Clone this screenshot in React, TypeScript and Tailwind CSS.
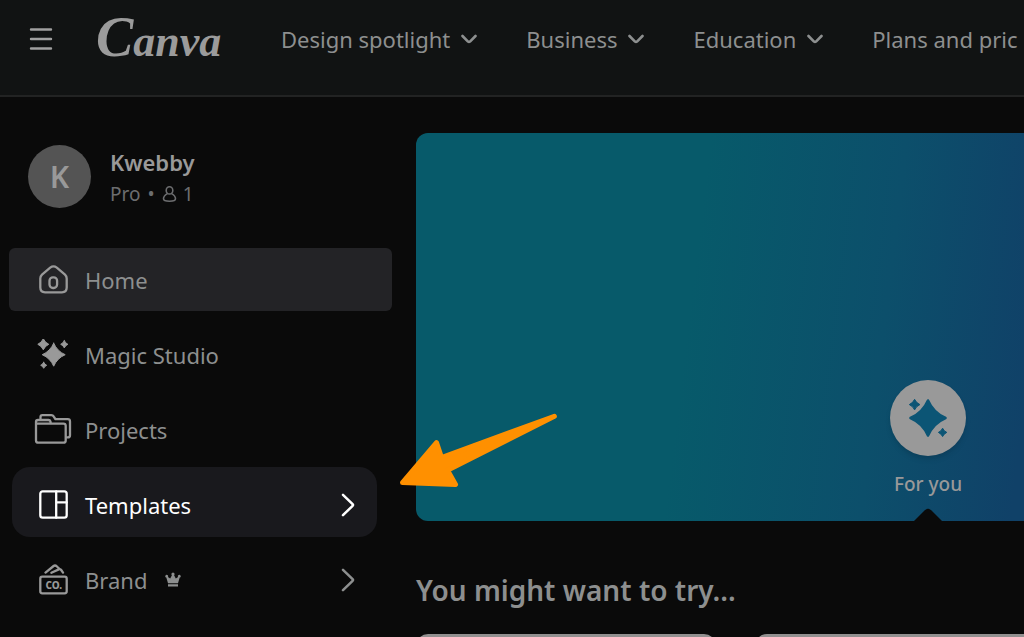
import type { ReactNode } from "react";
import clsx from "clsx";

const navItems = [
  { label: "Design spotlight", menu: true },
  { label: "Business", menu: true },
  { label: "Education", menu: true },
  { label: "Plans and pric", menu: false },
];

// four-pointed star used by the magic icons
function starPath(cx: number, cy: number, r: number) {
  const k = r * 0.3;
  return `M${cx} ${cy - r}Q${cx + k} ${cy - k} ${cx + r} ${cy}Q${cx + k} ${cy + k} ${cx} ${cy + r}Q${cx - k} ${cy + k} ${cx - r} ${cy}Q${cx - k} ${cy - k} ${cx} ${cy - r}Z`;
}

function SideIcon({ children }: { children: ReactNode }) {
  return (
    <svg
      viewBox="-3 0 38 32"
      className="h-8 w-[38px] shrink-0"
      fill="none"
      stroke="currentColor"
      strokeWidth="2.3"
      strokeLinecap="round"
      strokeLinejoin="round"
      aria-hidden="true"
    >
      {children}
    </svg>
  );
}

function HomeIcon() {
  return (
    <SideIcon>
      <path d="M5 10.6 13.2 3.6Q16.5 1.2 19.8 3.6L28 10.6Q29.7 12.2 29.7 14.6V23.6Q29.7 28.3 25 28.3H8Q3.3 28.3 3.3 23.6V14.6Q3.3 12.2 5 10.6Z" />
      <rect x="12.5" y="13.4" width="7.6" height="10.6" rx="3.4" />
    </SideIcon>
  );
}

function MagicIcon() {
  return (
    <SideIcon>
      <g fill="currentColor" strokeWidth="1">
        <path d={starPath(16.7, 15.7, 11.5)} />
        <path d={starPath(6.3, 5.3, 5.5)} />
        <path d={starPath(27.3, 5.3, 3.6)} />
        <path d={starPath(6.7, 26.3, 3)} />
      </g>
    </SideIcon>
  );
}

function ProjectsIcon() {
  return (
    <SideIcon>
      <path d="M-1 11V8Q-1 6 1 6H11.5Q13 6 13.4 7.3L13.8 9.6H26.5Q28.7 9.6 28.7 11.8V26.5Q28.7 28.7 26.5 28.7H1.2Q-1 28.7-1 26.5V9.6H13.8" />
      <path d="M3.5 5.5V3Q3.5 1.2 5.3 1.2H14.3Q16 1.2 16.8 2.6L18.4 5.2H30.8Q33 5.2 33 7.4V21.2Q33 23.4 30.8 23.4H29.5" />
    </SideIcon>
  );
}

function TemplatesIcon() {
  return (
    <SideIcon>
      <rect x="3.3" y="2.3" width="26.4" height="26.4" rx="2.4" />
      <path d="M19.2 2.3V28.7M19.2 13.4H29.7" />
    </SideIcon>
  );
}

function BrandIcon() {
  return (
    <SideIcon>
      <rect x="3.3" y="12.7" width="26.4" height="16.6" rx="2" />
      <path d="M8.5 8.6 16.6 2Q18 .9 19.4 2L22.6 5M14.4 8.8 21.8 5.4Q23.2 4.8 24.2 6L26 8.6" />
      <text
        x="16.8"
        y="24.6"
        textAnchor="middle"
        fill="currentColor"
        stroke="none"
        className="font-['Noto_Sans',sans-serif] text-[10px] font-extrabold"
      >
        CO.
      </text>
    </SideIcon>
  );
}

function CrownIcon() {
  return (
    <svg viewBox="0 0 16 15" className="h-[15px] w-4" fill="currentColor" aria-hidden="true">
      <path d="M3 11.2 1.3 5.6A1.4 1.4 0 1 1 2.9 5L5.2 6.6 6.9 3.2A1.5 1.5 0 1 1 9.1 3.2L10.8 6.6 13.1 5A1.4 1.4 0 1 1 14.7 5.6L13 11.2ZM3 12.3H13V14.4H3Z" />
    </svg>
  );
}

function ChevronDown() {
  return (
    <svg viewBox="0 0 16 10" className="h-[10px] w-4" fill="none" stroke="currentColor" strokeWidth="2.6" strokeLinecap="round" strokeLinejoin="round" aria-hidden="true">
      <path d="M1.5 2 7 7.6Q8 8.4 9 7.6L14.5 2" />
    </svg>
  );
}

function ChevronRight() {
  return (
    <svg viewBox="0 0 14 24" className="h-6 w-[14px]" fill="none" stroke="currentColor" strokeWidth="2.5" strokeLinecap="round" strokeLinejoin="round" aria-hidden="true">
      <path d="M2 1.8 11.6 11.2Q12.4 12 11.6 12.8L2 22.2" />
    </svg>
  );
}

const menu = [
  { label: "Home", icon: <HomeIcon />, state: "current" },
  { label: "Magic Studio", icon: <MagicIcon /> },
  { label: "Projects", icon: <ProjectsIcon /> },
  { label: "Templates", icon: <TemplatesIcon />, state: "focus", arrow: true },
  { label: "Brand", icon: <BrandIcon />, arrow: true, crown: true },
];

function Header() {
  return (
    <header className="flex h-[97px] shrink-0 items-center overflow-hidden border-b-2 border-[#222323] bg-[#111313] pb-[18px] pl-[29px] text-[#8d8f8f]">
      <button type="button" aria-label="Open menu" className="shrink-0">
        <svg viewBox="0 0 24 24" className="size-6" fill="none" stroke="#a0a0a0" strokeWidth="2.4" strokeLinecap="round">
          <path d="M2 2.5H22M2 12H22M2 21.5H22" />
        </svg>
      </button>
      <a
        href="#"
        className="ml-[43px] w-[126px] shrink-0 pb-1 font-['Liberation_Serif',serif] text-[56px] leading-none font-bold whitespace-nowrap text-[#9b9b9b] italic"
      >
        C<span className="text-[44px]">anva</span>
      </a>
      <nav className="ml-[59px] flex shrink-0 gap-[49px] text-[22px] leading-8 whitespace-nowrap">
        {navItems.map((item) =>
          item.menu ? (
            <button key={item.label} type="button" className="flex items-center gap-[11px]">
              {item.label}
              <ChevronDown />
            </button>
          ) : (
            <a key={item.label} href="#">
              {item.label}
            </a>
          )
        )}
      </nav>
    </header>
  );
}

function Sidebar() {
  return (
    <aside className="w-[416px] shrink-0 pt-[45px]">
      <div className="flex items-center gap-[19px] pl-7">
        <div className="flex size-[63px] items-center justify-center rounded-full bg-[#545454] text-[30px] font-semibold text-[#999]">
          K
        </div>
        <div className="pt-1 text-[#999]">
          <p className="text-[22px] leading-8 font-semibold">Kwebby</p>
          <p className="flex items-center text-[19px] leading-8 text-[#6c6d6f]">
            Pro <span className="mx-[7px]">•</span>
            <svg viewBox="0 0 14 16" className="mr-[6px] h-4 w-[15px]" fill="none" stroke="currentColor" strokeWidth="1.6" strokeLinejoin="round" aria-hidden="true">
              <ellipse cx="7" cy="4.4" rx="3.3" ry="3.6" />
              <path d="M4.9 7.6Q1 9.8 1 12.8Q1 15.2 7 15.2T13 12.8Q13 9.8 9.1 7.6" />
            </svg>
            1
          </p>
        </div>
      </div>
      <ul className="mt-8">
        {menu.map((item) => (
          <li key={item.label} className="flex h-[75px] items-center">
            <a
              href="#"
              className={clsx(
                "flex items-center text-[22px] leading-8",
                item.state === "focus"
                  ? "mb-[6px] ml-3 h-[70px] w-[365px] rounded-[18px] bg-[#19191d] pt-[6px] pl-[22px] text-white"
                  : "ml-[9px] h-[63px] w-[383px] rounded-md pl-[25px] text-[#8d8f8f]",
                item.state === "current" && "bg-[#232326]"
              )}
            >
              <span className={clsx("mr-[13px]", item.state !== "focus" && "text-[#999]")}>
                {item.icon}
              </span>
              {item.label}
              {item.crown && (
                <span className="ml-[18px]">
                  <CrownIcon />
                </span>
              )}
              {item.arrow && (
                <span className={clsx("ml-auto", item.state === "focus" ? "mr-[22px]" : "mr-[37px]")}>
                  <ChevronRight />
                </span>
              )}
            </a>
          </li>
        ))}
      </ul>
    </aside>
  );
}

function Hero() {
  return (
    <section className="relative flex h-[388px] flex-col items-end justify-end rounded-l-xl bg-[linear-gradient(97deg,#075a6a_45%,#0c4f6b_75%,#104168_98%)] pr-[58px] pb-[23px]">
      <button type="button" className="flex w-[76px] flex-col items-center gap-[14px]">
        <span className="flex size-[76px] items-center justify-center rounded-full bg-[#999] shadow-md">
          <svg viewBox="0 0 40 40" className="size-10" fill="#0c5575" stroke="#0c5575" strokeLinejoin="round" aria-hidden="true">
            <path strokeWidth="2.6" d={starPath(20, 20, 17.5)} />
            <path strokeWidth="1" d={starPath(6.6, 6.6, 5.3)} />
            <path strokeWidth="1" d={starPath(34.6, 34.4, 4.2)} />
          </svg>
        </span>
        <span className="text-[19px] leading-7 font-medium whitespace-nowrap text-[#999]">For you</span>
      </button>
      {/* pointer under the selected category */}
      <svg viewBox="0 0 28 13" className="absolute right-[82px] bottom-0 h-[13px] w-7" fill="#0a0a0a" aria-hidden="true">
        <path d="M0 13 10.5 2.4Q14-1 17.5 2.4L28 13Z" />
      </svg>
    </section>
  );
}

export default function App() {
  return (
    <div className="flex h-screen flex-col overflow-hidden bg-[#0a0a0a] font-['Noto_Sans',sans-serif]">
      <Header />
      <div className="relative flex min-h-0 flex-1">
        <Sidebar />
        <main className="min-w-0 flex-1 pt-9">
          <Hero />
          <h1 className="mt-[49px] text-[28px] leading-10 font-semibold text-[#8d8f8f]">
            You might want to try...
          </h1>
          <div className="mt-6 flex gap-[39px]">
            <div className="h-40 w-[300px] shrink-0 rounded-xl bg-[#929090]" />
            <div className="h-40 w-[300px] shrink-0 rounded-xl bg-[#929090]" />
          </div>
        </main>
        <svg
          viewBox="400 410 160 80"
          className="pointer-events-none absolute top-[313px] left-[400px] h-20 w-40"
          fill="#ff9000"
          stroke="#ff9000"
          strokeWidth="5"
          strokeLinejoin="round"
          aria-hidden="true"
        >
          <path d="M402.5 482.5 436.5 442.6 441.5 457.5 554.4 416.3 447.5 470.2 455.5 484.5Z" />
        </svg>
      </div>
    </div>
  );
}
